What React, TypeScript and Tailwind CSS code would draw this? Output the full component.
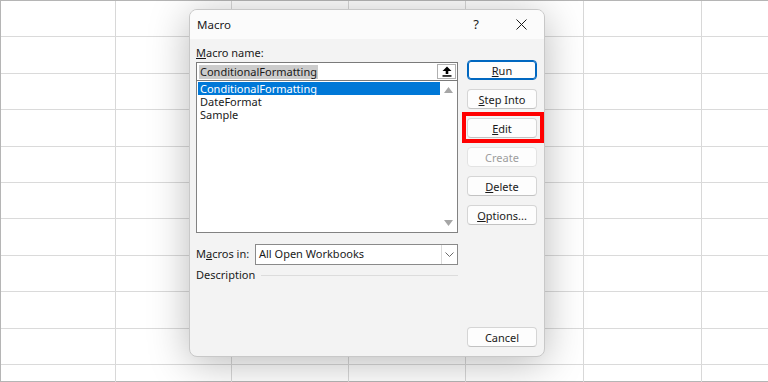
import React from 'react'

const cols = Array.from({ length: 7 })
const rows = Array.from({ length: 11 })

function Btn({
  children,
  primary,
  disabled,
}: {
  children: React.ReactNode
  primary?: boolean
  disabled?: boolean
}) {
  return (
    <div
      className={
        'h-[20px] w-[70px] rounded-[4px] flex items-center justify-center text-[11px] leading-none bg-[#fdfdfd] ' +
        (primary
          ? 'border border-[#0067c0] shadow-[inset_0_0_0_1px_#0067c0] text-[#1a1a1a]'
          : disabled
          ? 'border border-[#e3e3e3] text-[#9d9d9d]'
          : 'border border-[#d5d5d5] border-b-[#c2c2c2] text-[#1a1a1a]')
      }
    >
      {children}
    </div>
  )
}

export default function App() {
  return (
    <div
      className="relative w-[768px] h-[382px] overflow-hidden bg-white"
      style={{ fontFamily: '"Noto Sans", "Open Sans", sans-serif' }}
    >
      {/* spreadsheet grid */}
      <div className="border-t border-l border-b border-[#b5b5b5] h-[382px]">
        {rows.map((_, r) => (
          <div
            key={r}
            className="grid grid-cols-[115px_116px_117px_117px_118px_118px_1fr] h-[36.4px] border-b border-[#dadada]"
          >
            {cols.map((_, c) => (
              <div key={c} className={c < 6 ? 'border-r border-[#d8d8d8]' : ''} />
            ))}
          </div>
        ))}
      </div>

      {/* Macro dialog */}
      <div className="absolute left-[189px] top-[9px] w-[356px] h-[348px] rounded-[8px] bg-[#f3f3f3] border border-[#c8c8c8] shadow-[0_6px_40px_rgba(0,0,0,0.28)] flex flex-col overflow-hidden text-[#1a1a1a]">
        {/* title bar */}
        <div className="h-[29px] bg-[#fbfbfb] flex items-center pl-[7px] shrink-0">
          <span className="text-[11.5px]">Macro</span>
          <span className="ml-auto text-[13px] mr-[37px]">?</span>
          <svg width="11" height="11" viewBox="0 0 11 11" className="mr-[17px]">
            <path d="M0.5 0.5 L10.5 10.5 M10.5 0.5 L0.5 10.5" stroke="#1a1a1a" strokeWidth="1" />
          </svg>
        </div>

        {/* body */}
        <div className="flex-1 flex pl-[6px] pr-[7px] pb-[9px]">
          {/* left column */}
          <div className="w-[263px] flex flex-col">
            <div className="text-[11px] leading-[16px] pt-[6px] h-[23px]">
              <u>M</u>acro name:
            </div>
            <div className="h-[19px] border border-[#7a7a7a] bg-white flex items-center pl-[2px] pr-[1px]">
              <span className="bg-[#cccccc] text-[11px] leading-[14px] px-[1px]">ConditionalFormatting</span>
              <div className="ml-auto w-[19px] h-[15px] border border-[#b0b0b0] bg-white flex items-center justify-center">
                <svg width="10" height="11" viewBox="0 0 10 11">
                  <path d="M5 0.5 L9.5 5 L6.3 5 L6.3 8 L3.7 8 L3.7 5 L0.5 5 Z" fill="#000" />
                  <rect x="0.5" y="9.2" width="9" height="1.5" fill="#000" />
                </svg>
              </div>
            </div>
            <div className="h-[152px] border border-t-0 border-[#828282] bg-white flex">
              <div className="flex-1 pt-[1px] pl-[1px] text-[11px] leading-[13px]">
                <div className="bg-[#0078d7] text-white pl-[2px] h-[13px]">ConditionalFormatting</div>
                <div className="pl-[2px] h-[13px]">DateFormat</div>
                <div className="pl-[2px] h-[13px]">Sample</div>
              </div>
              <div className="w-[17px] flex flex-col items-center justify-between py-[6px]">
                <svg width="9" height="6" viewBox="0 0 9 6">
                  <path d="M4.5 0 L9 6 L0 6 Z" fill="#a6a6a6" />
                </svg>
                <svg width="9" height="6" viewBox="0 0 9 6">
                  <path d="M0 0 L9 0 L4.5 6 Z" fill="#a6a6a6" />
                </svg>
              </div>
            </div>

            <div className="flex items-center mt-[11px] h-[21px]">
              <span className="text-[11px] w-[59px]">
                M<u>a</u>cros in:
              </span>
              <div className="flex-1 h-[21px] border border-[#8a8a8a] bg-white flex items-center">
                <span className="text-[11px] pl-[3px]">All Open Workbooks</span>
                <div className="ml-auto w-[16px] h-[19px] border-l border-[#dadada] flex items-center justify-center">
                  <svg width="9" height="5" viewBox="0 0 9 5">
                    <path d="M0.5 0.5 L4.5 4.5 L8.5 0.5" fill="none" stroke="#6a6a6a" strokeWidth="1" />
                  </svg>
                </div>
              </div>
            </div>
            <div className="flex items-center mt-[2px] h-[16px]">
              <span className="text-[11px] leading-[16px]">Description</span>
              <div className="flex-1 h-px bg-[#dcdcdc] ml-[6px]" />
            </div>
          </div>

          {/* right column buttons */}
          <div className="ml-[9px] flex flex-col pt-[21px] gap-[9px]">
            <Btn primary>
              <u>R</u>un
            </Btn>
            <Btn>
              <u>S</u>tep Into
            </Btn>
            <div className="relative">
              <Btn>
                <u>E</u>dit
              </Btn>
              <div className="absolute -top-[6px] -bottom-[5px] -left-[5px] -right-[7px] border-4 border-[#ff0000]" />
            </div>
            <Btn disabled>Create</Btn>
            <Btn>
              <u>D</u>elete
            </Btn>
            <Btn>
              <u>O</u>ptions...
            </Btn>
            <div className="mt-auto">
              <Btn>Cancel</Btn>
            </div>
          </div>
        </div>
      </div>
    </div>
  )
}
